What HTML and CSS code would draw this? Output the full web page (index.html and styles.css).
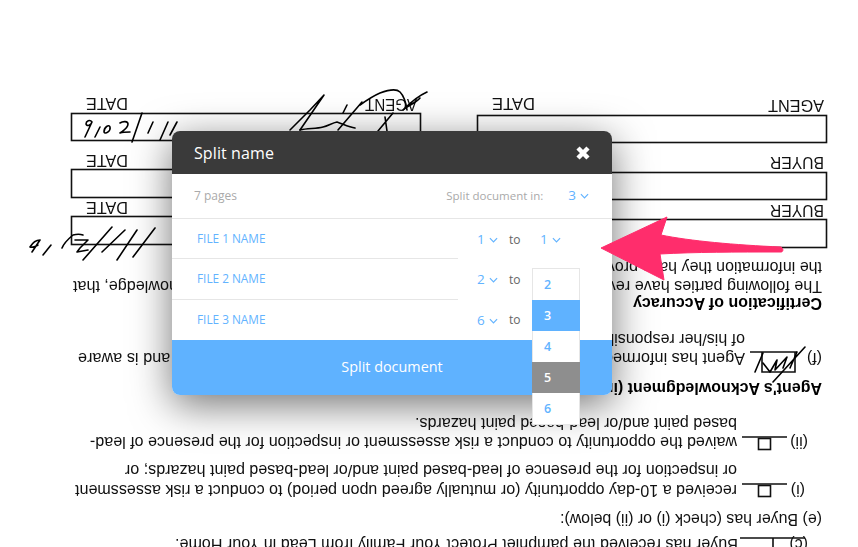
FILE: index.html
```html
<!DOCTYPE html>
<html lang="en">
<head>
<meta charset="utf-8">
<title>Split name</title>
<link rel="stylesheet" href="styles.css">
</head>
<body>
<main class="stage">
  <svg class="doc" viewBox="0 0 858 547" width="858" height="547" aria-label="Scanned document, upside down">
    <g class="boxes">
      <rect x="71.500" y="113.500" width="349" height="27"/>
      <rect x="71.500" y="169.500" width="349" height="28"/>
      <rect x="71.500" y="216.500" width="349" height="28"/>
      <rect x="477.500" y="115.500" width="349" height="27"/>
      <rect x="477.500" y="172.500" width="349" height="27"/>
      <rect x="477.500" y="219.500" width="349" height="28"/>
      <rect x="758.500" y="485.500" width="12" height="11"/>
      <rect x="758.500" y="438.500" width="12" height="11"/>
      <path d="M742 484H787M742 437H787M750 352H797M762 352V372H795V352M740 538H805M773 538V547"/>
    </g>
    <g class="label">
      <text transform="rotate(180 128 98)" x="128" y="98" textLength="42" lengthAdjust="spacingAndGlyphs">DATE</text>
      <text transform="rotate(180 128 155)" x="128" y="155" textLength="42" lengthAdjust="spacingAndGlyphs">DATE</text>
      <text transform="rotate(180 128 202)" x="128" y="202" textLength="42" lengthAdjust="spacingAndGlyphs">DATE</text>
      <text transform="rotate(180 535 98)" x="535" y="98" textLength="43" lengthAdjust="spacingAndGlyphs">DATE</text>
      <text transform="rotate(180 417 99)" x="417" y="99" textLength="52" lengthAdjust="spacingAndGlyphs">AGENT</text>
      <text transform="rotate(180 824 100)" x="824" y="100" textLength="56" lengthAdjust="spacingAndGlyphs">AGENT</text>
      <text transform="rotate(180 824 157)" x="824" y="157" textLength="54" lengthAdjust="spacingAndGlyphs">BUYER</text>
      <text transform="rotate(180 824 205)" x="824" y="205" textLength="54" lengthAdjust="spacingAndGlyphs">BUYER</text>
    </g>
    <g class="body-text">
      <text transform="rotate(180 822 262)" x="822" y="262">the information they have provided is true and accurate.</text>
      <text transform="rotate(180 822 281)" x="822" y="281" textLength="749" lengthAdjust="spacingAndGlyphs">The following parties have reviewed the information above and certify, to the best of their knowledge, that</text>
      <text class="strong" transform="rotate(180 822 298)" x="822" y="298" textLength="189" lengthAdjust="spacingAndGlyphs">Certification of Accuracy</text>
      <text transform="rotate(180 745 334)" x="745" y="334">of his/her responsibility to ensure compliance.</text>
      <text transform="rotate(180 745 353)" x="745" y="353" textLength="667" lengthAdjust="spacingAndGlyphs">Agent has informed the Seller of the Seller's obligations under 42 U.S.C. 4852d and is aware</text>
      <text transform="rotate(180 822 353)" x="822" y="353">(f)</text>
      <text class="strong" transform="rotate(180 822 383)" x="822" y="383">Agent's Acknowledgment (initial)</text>
      <text transform="rotate(180 737 418)" x="737" y="418" textLength="322" lengthAdjust="spacingAndGlyphs">based paint and/or lead-based paint hazards.</text>
      <text transform="rotate(180 737 437)" x="737" y="437" textLength="647" lengthAdjust="spacingAndGlyphs">waived the opportunity to conduct a risk assessment or inspection for the presence of lead-</text>
      <text transform="rotate(180 808 437)" x="808" y="437">(ii)</text>
      <text transform="rotate(180 737 465)" x="737" y="465" textLength="612" lengthAdjust="spacingAndGlyphs">or inspection for the presence of lead-based paint and/or lead-based paint hazards; or</text>
      <text transform="rotate(180 737 485)" x="737" y="485" textLength="662" lengthAdjust="spacingAndGlyphs">received a 10-day opportunity (or mutually agreed upon period) to conduct a risk assessment</text>
      <text transform="rotate(180 805 485)" x="805" y="485">(i)</text>
      <text transform="rotate(180 822 514)" x="822" y="514" textLength="262" lengthAdjust="spacingAndGlyphs">(e) Buyer has (check (i) or (ii) below):</text>
      <text transform="rotate(180 738 539)" x="738" y="539" textLength="563" lengthAdjust="spacingAndGlyphs">Buyer has received the pamphlet Protect Your Family from Lead in Your Home.</text>
      <text transform="rotate(180 808 539)" x="808" y="539">(c)</text>
    </g>
    <g class="ink">
      <path d="M85 137L92 122C90 119 86 121 86 124C87 127 91 125 92 122"/>
      <path d="M95 137L100 127"/>
      <path d="M104 132C104 127 109 124 110 127C111 131 105 135 104 132Z"/>
      <path d="M120 123C123 121 128 121 128 124C128 128 124 130 120 133C123 132 127 132 130 132"/>
      <path d="M132 142L142 113M148 133L153 122M160 140L168 122M170 135L177 122"/>
      <path d="M32 252L40 240C37 240 33 242 30 247C33 248 36 246 38 245"/>
      <path d="M43 255L51 245"/>
      <path d="M62 248C64 243 67 240 73 235C77 234 80 234 83 235"/>
      <path d="M75 240H88L80 248L77 252L88 250"/>
      <path d="M83 260L112 227M102 252L125 230M117 260L137 230M133 257L155 228"/>
      <path d="M290 130L310 110L324 95L300 130"/>
      <path d="M362 102L338 130M347 105L343 113"/>
      <path d="M360 105C367 100 373 96 380 93C388 90 396 88 400 92C404 96 406 103 407 110"/>
      <path d="M427 92C418 96 410 103 403 110C407 106 416 103 420 98"/>
      <path d="M300 130C308 128 316 129 323 127C328 126 332 123 337 122C343 124 349 127 355 128"/>
      <path d="M393 113L378 131M385 117L387 131"/>
      <path d="M755 372L763 353M763 363L770 372L777 360L775 370L787 357L783 368M773 382L805 347M797 352L790 368"/>
    </g>
  </svg>

  <section class="modal">
    <header class="modal-head">
      <h1>Split name</h1>
      <svg class="close" viewBox="0 0 14 14" width="14" height="14" aria-label="Close"><path d="M2 2L12 12M12 2L2 12"/></svg>
    </header>
    <div class="summary">
      <span class="pages">7 pages</span>
      <span class="split-in">Split document in:</span>
      <span class="num total">3<svg class="chev" viewBox="0 0 10 6"><path d="M1 1L5 5L9 1"/></svg></span>
    </div>
    <ul class="files">
      <li class="file">
        <span class="name">FILE 1 NAME</span>
        <span class="num">1<svg class="chev" viewBox="0 0 10 6"><path d="M1 1L5 5L9 1"/></svg></span>
        <span class="to">to</span>
        <span class="num">1<svg class="chev" viewBox="0 0 10 6"><path d="M1 1L5 5L9 1"/></svg></span>
      </li>
      <li class="file">
        <span class="name">FILE 2 NAME</span>
        <span class="num">2<svg class="chev" viewBox="0 0 10 6"><path d="M1 1L5 5L9 1"/></svg></span>
        <span class="to">to</span>
        <span class="num"></span>
      </li>
      <li class="file">
        <span class="name">FILE 3 NAME</span>
        <span class="num">6<svg class="chev" viewBox="0 0 10 6"><path d="M1 1L5 5L9 1"/></svg></span>
        <span class="to">to</span>
        <span class="num"></span>
      </li>
    </ul>
    <button class="submit">Split document</button>
    <ul class="menu">
      <li>2</li>
      <li class="selected">3</li>
      <li>4</li>
      <li class="hover">5</li>
      <li>6</li>
    </ul>
  </section>

  <svg class="pointer" viewBox="0 0 858 547" width="858" height="547" aria-hidden="true">
    <path class="arrow" d="M601 248L667 217L661 235C690 241 735 245 781 247C784 249 783 252 781 252C735 252 695 252 660 254L664 280Z"/>
  </svg>
</main>
</body>
</html>
```
FILE: styles.css
```css
* { box-sizing: border-box; }
html, body { margin: 0; padding: 0; background: #fff; }
body { width: 858px; height: 547px; overflow: hidden; font-family: "Open Sans", "Noto Sans", sans-serif; }
.stage { position: relative; width: 858px; height: 547px; overflow: hidden; }
.doc { display: block; filter: blur(0.45px); }
.boxes rect, .boxes path { fill: none; stroke: #111; stroke-width: 1.600; }
.label text { font: 16px "Liberation Sans", Arial, sans-serif; fill: #111; }
.body-text text { font: 16px "Liberation Sans", Arial, sans-serif; fill: #111; }
.body-text .strong { font-weight: 700; fill: #000; }
.ink path { fill: none; stroke: #000; stroke-width: 1.600; stroke-linecap: round; stroke-linejoin: round; }
.pointer { position: absolute; left: 0; top: 0; pointer-events: none; }
.arrow { fill: #ff2d6c; stroke: #ff2d6c; stroke-width: 1; stroke-linejoin: round; }

.modal {
  position: absolute; left: 172px; top: 131px; width: 440px; height: 264px;
  display: flex; flex-direction: column;
  background: #fff; border-radius: 8px;
  box-shadow: 0 10px 40px rgba(0, 0, 0, .55);
}
.modal-head {
  height: 43px; flex: none; display: flex; align-items: center; justify-content: space-between;
  padding: 0 22px; background: #3a3a3a; color: #fff; border-radius: 8px 8px 0 0;
}
.modal-head h1 { margin: 0; font-size: 16px; font-weight: 400; line-height: 22px; letter-spacing: .1px; }
.close { display: block; }
.close path { fill: none; stroke: #fff; stroke-width: 4.500; }
.summary {
  height: 45px; flex: none; display: flex; align-items: center;
  padding: 0 23px 2px 22px; font-size: 12px; color: #aaa; border-bottom: 1px solid #e6e6e6;
}
.pages { flex: 1; }
.split-in { margin-right: 25px; font-size: 11.500px; }
.num { display: inline-flex; align-items: center; gap: 4px; width: 32px; font-size: 13.500px; color: #62b3ff; }
.total { width: auto; }
.chev { width: 9px; height: 6px; flex: none; margin-top: 2px; }
.chev path { fill: none; stroke: #62b3ff; stroke-width: 1.300; }
.files { list-style: none; margin: 0; padding: 0; flex: 1; display: flex; flex-direction: column; }
.file {
  flex: 1; display: flex; align-items: center; position: relative; padding-left: 25px;
  font-size: 12px;
}
.file + .file::before {
  content: ""; position: absolute; left: 0; top: -1px; width: 286px; height: 1px; background: #e6e6e6;
}
.name { width: 280px; color: #62b3ff; padding-bottom: 2px; font-size: 11.800px; }
.to { width: 31px; color: #666; }
.submit {
  height: 55px; flex: none; border: 0; margin: 0; background: #5fb2ff; color: #fff;
  font: 14.400px "Open Sans", "Noto Sans", sans-serif; border-radius: 0 0 8px 8px; padding: 0 0 2px;
}
.menu {
  list-style: none; margin: 0; padding: 0; position: absolute; left: 360px; top: 137px; width: 48px; height: 157px;
  background: #fff; border: 1px solid #e6e6e6; display: flex; flex-direction: column;
  font-size: 12.500px; font-weight: 600; color: #62b3ff;
}
.menu li { flex: 1; display: flex; align-items: center; padding-left: 11px; }
.menu .selected { margin: 0 -1px; padding-left: 12px; background: #5fb2ff; color: #fff; }
.menu .hover { margin: 0 -1px; padding-left: 12px; background: #8e8e8e; color: #fff; }
```
